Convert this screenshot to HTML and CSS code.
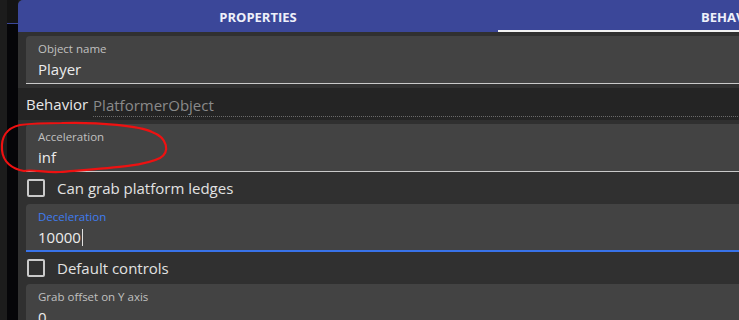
FILE: index.html
```html
<!DOCTYPE html>
<html>
<head>
<meta charset="utf-8">
<link rel="stylesheet" href="styles.css">
</head>
<body>
<div class="app">
  <div class="rail-outer"></div>
  <div class="rail-inner"><div class="rail-top"></div></div>
  <div class="panel">
    <div class="tabs">
      <div class="tab">PROPERTIES</div>
      <div class="tab tab-active">BEHAVIORS</div>
    </div>
    <div class="content">
      <div class="field">
        <div class="field-label">Object name</div>
        <div class="field-value">Player</div>
      </div>
      <div class="behavior-row">
        <span class="behavior-title">Behavior</span>
        <span class="behavior-name">PlatformerObject</span>
      </div>
      <div class="field">
        <div class="field-label">Acceleration</div>
        <div class="field-value">inf</div>
      </div>
      <div class="check-row">
        <span class="checkbox"></span>
        <span class="check-label">Can grab platform ledges</span>
      </div>
      <div class="field field-focused">
        <div class="field-label">Deceleration</div>
        <div class="field-value">10000<span class="caret"></span></div>
      </div>
      <div class="check-row">
        <span class="checkbox"></span>
        <span class="check-label">Default controls</span>
      </div>
      <div class="field">
        <div class="field-label">Grab offset on Y axis</div>
        <div class="field-value">0</div>
      </div>
    </div>
  </div>
  <svg class="annotation" width="180" height="60" viewBox="0 120 180 60">
    <path d="M 62 123 C 100 122, 140 126, 152 132 C 168 138, 170 152, 160 158 C 145 166, 110 168, 60 172 C 45 173, 32 169, 24 171 C 12 169, 3 162, 2 150 C 1 138, 6 128, 20 125 C 35 123, 50 123, 62 123" fill="none" stroke="#ee1111" stroke-width="2.2" stroke-linecap="round"/>
  </svg>
</div>
</body>
</html>
```
FILE: styles.css
```css
html, body {
  margin: 0;
  padding: 0;
  overflow: hidden;
  background: #1b1b1b;
}
.app {
  position: relative;
  display: flex;
  width: 739px;
  height: 320px;
  overflow: hidden;
  font-family: "Open Sans", "Noto Sans", sans-serif;
}
.rail-outer {
  flex: 0 0 7px;
  background: #1c1c1c;
}
.rail-inner {
  flex: 0 0 11px;
  background: #050508;
}
.rail-top {
  height: 23px;
  background: #141414;
  border-bottom: 1px solid #3b4799;
}
.panel {
  flex: 0 0 960px;
  background: #303030;
  border-top-left-radius: 5px;
  overflow: hidden;
}
.tabs {
  display: flex;
  height: 32px;
  background: #3b4799;
}
.tab {
  flex: 0 0 480px;
  display: flex;
  align-items: center;
  justify-content: center;
  color: #eef0fa;
  font-weight: 700;
  font-size: 13px;
  box-sizing: border-box;
  padding-top: 1px;
}
.tab-active {
  border-bottom: 2px solid #f2f2f2;
  padding-top: 3px;
}
.content {
  display: flex;
  flex-direction: column;
  padding: 4px 8px 0 8px;
}
.field {
  height: 48px;
  box-sizing: border-box;
  background: #434343;
  border-top-left-radius: 4px;
  border-bottom: 1px solid #c9c9c9;
  padding: 5px 12px 0 12px;
}
.field-focused {
  border-bottom: 2px solid #3872e8;
}
.field-label {
  font-size: 11.5px;
  line-height: 16px;
  color: #c0c0c0;
}
.field-focused .field-label {
  color: #3f7cf0;
}
.field-value {
  font-size: 15px;
  line-height: 22px;
  color: #ececec;
  margin-top: 1px;
  display: flex;
  align-items: center;
}
.caret {
  display: inline-block;
  width: 1px;
  height: 17px;
  background: #e0e0e0;
  margin-left: 1px;
}
.behavior-row {
  margin: 4px -8px 4px -8px;
  height: 32px;
  background: #242424;
  display: flex;
  align-items: center;
  padding-left: 8px;
  box-sizing: border-box;
}
.behavior-title {
  font-size: 15px;
  color: #e8e8e8;
  margin-right: 5px;
}
.behavior-name {
  flex: 1;
  font-size: 15px;
  color: #8a8a8a;
  border-bottom: 1px dotted #6a6a6a;
  line-height: 22px;
  margin-top: 3px;
}
.check-row {
  height: 32px;
  display: flex;
  align-items: center;
  padding-left: 1px;
}
.checkbox {
  width: 14px;
  height: 14px;
  border: 2px solid #cacaca;
  border-radius: 2px;
  margin-right: 12px;
}
.check-label {
  font-size: 15px;
  color: #e2e2e2;
}
.annotation {
  position: absolute;
  left: 0;
  top: 120px;
}
```
